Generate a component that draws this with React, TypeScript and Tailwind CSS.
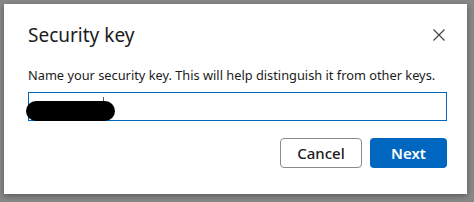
import React from 'react';

export default function App() {
  return (
    <div className="w-[474px] h-[202px] bg-[#888888] pl-[4px] pt-[4px] overflow-hidden" style={{ fontFamily: '"Noto Sans", "Open Sans", sans-serif' }}>
      <div className="relative w-[463px] h-[190px] bg-white shadow-[0_2px_6px_rgba(0,0,0,0.35)] pl-[24px] pr-[20px] pt-[18px] flex flex-col">
        {/* Header */}
        <div className="flex items-start justify-between">
          <h2 className="text-[19px] leading-[26px] font-normal text-[#1b1b1b]">Security key</h2>
          <button className="mt-[5px] w-[16px] h-[16px] flex items-center justify-center text-[#404040]">
            <svg width="12" height="12" viewBox="0 0 12 12" fill="none" stroke="currentColor" strokeWidth="1.1">
              <path d="M0.5 0.5 L11.5 11.5 M11.5 0.5 L0.5 11.5" />
            </svg>
          </button>
        </div>

        {/* Body */}
        <p className="mt-[17px] text-[12.8px] leading-[20px] text-[#1b1b1b] whitespace-nowrap">
          Name your security key. This will help distinguish it from other keys.
        </p>

        <div className="relative mt-[7px] w-[419px] h-[29px] border border-[#0067c0] bg-white">
          <span className="absolute left-[74px] top-[4px] w-px h-[5px] bg-[#555]" />
          <span className="absolute left-[-3px] top-[8px] w-[89px] h-[20px] rounded-full bg-black" />
        </div>

        {/* Footer */}
        <div className="mt-[17px] w-[419px] flex justify-end gap-[8px]">
          <button className="w-[82px] h-[30px] rounded-[4px] border border-[#8a8a8a] bg-white text-[15px] text-[#1b1b1b] font-medium">
            Cancel
          </button>
          <button className="w-[77px] h-[30px] rounded-[4px] bg-[#0067c0] text-[15px] text-white font-semibold">
            Next
          </button>
        </div>
      </div>
    </div>
  );
}
